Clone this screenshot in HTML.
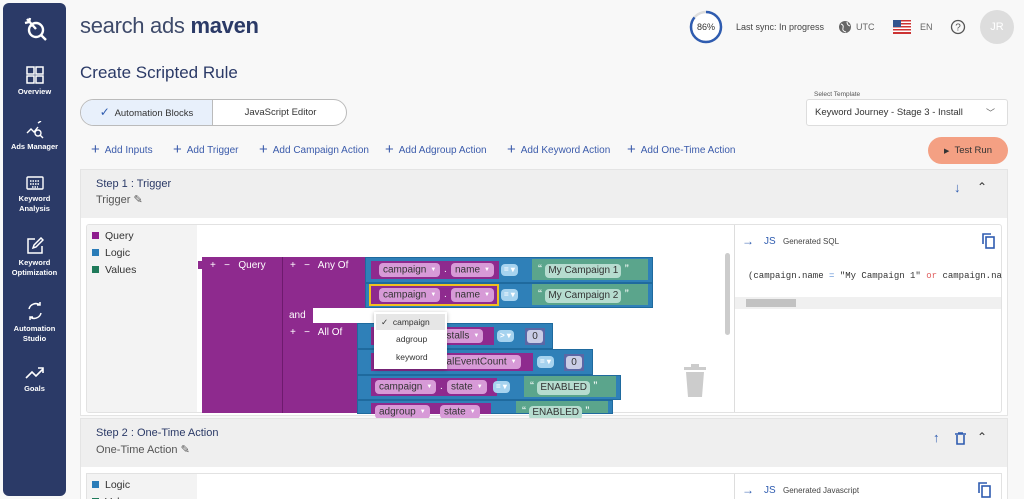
<!DOCTYPE html>
<html><head><meta charset="utf-8"><style>
*{box-sizing:border-box;margin:0;padding:0}
html{width:1024px;height:499px;overflow:hidden}
body{width:1024px;height:499px;overflow:hidden;background:#f8f8f8;font-family:"Liberation Sans",sans-serif;position:relative;color:#3a4a6e}
.a{position:absolute}
.sb{left:3px;top:3px;width:63px;height:493px;background:#2b3a67;border-radius:6px}
.nav{position:absolute;left:0;width:63px;text-align:center;color:#fff;font-size:7.5px;font-weight:bold;line-height:10px}
.nav svg{display:block;margin:0 auto 3px}
.add{position:absolute;top:140px;font-size:10px;color:#3b5bab}
.add b{font-size:15px;font-weight:normal;margin-right:5px;position:relative;top:1px}
.p{position:absolute;background:#8e2a8e}
.bl{position:absolute;background:#2f80b8;border:1px solid #1f6a9e}
.pill{position:absolute;height:14px;border-radius:4px;background:#d79ad7;color:#333;font-size:10px;line-height:14px;padding:0 4px}
.pill i{font-style:normal;font-size:6px;color:#fff;margin-left:4px;vertical-align:middle}
.op{position:absolute;height:12px;border-radius:4px;background:#a6d3ef;color:#fff;font-size:8px;line-height:12px;padding:0 3px;font-weight:bold}
.gr{position:absolute;height:21px;background:#5ba58c;color:#fff;font-size:12px;line-height:20px}
.gr span{background:#b6dccf;color:#333;border-radius:4px;padding:0 3px;font-size:10px;line-height:14px;display:inline-block}
.wt{color:#fff;font-size:10px}
</style></head><body>
<div class="a sb">
 <div class="nav" style="top:12px"><svg width="28" height="28" viewBox="0 0 28 28" fill="none" stroke="#fff" stroke-width="2.4"><circle cx="15" cy="15" r="7"/><path d="M20 20l5 5M6 4l9 10M4 8l4-1 1-4M9 11l3-1"/></svg></div>
 <div class="nav" style="top:63px"><svg width="18" height="18" viewBox="0 0 18 18" fill="none" stroke="#fff" stroke-width="1.5"><rect x="1" y="1" width="7" height="7"/><rect x="10" y="1" width="7" height="7"/><rect x="1" y="10" width="7" height="7"/><rect x="10" y="10" width="7" height="7"/></svg>Overview</div>
 <div class="nav" style="top:118px"><svg width="18" height="18" viewBox="0 0 18 18" fill="none" stroke="#fff" stroke-width="1.4"><path d="M1 12l4-4 3 3 4-5M12 2l3-2"/><circle cx="12" cy="12" r="3"/><path d="M14 14l3 3"/></svg>Ads Manager</div>
 <div class="nav" style="top:172px"><svg width="18" height="16" viewBox="0 0 18 16" fill="none" stroke="#fff" stroke-width="1.4"><rect x="1" y="2" width="16" height="12" rx="1"/><path d="M4 6h10M4 9h10M6 12h6" stroke-dasharray="1.5 1"/></svg>Keyword<br>Analysis</div>
 <div class="nav" style="top:234px"><svg width="18" height="18" viewBox="0 0 18 18" fill="none" stroke="#fff" stroke-width="1.5"><path d="M9 2H2v14h14V9"/><path d="M7 11l1-3 7-7 2 2-7 7z"/></svg>Keyword<br>Optimization</div>
 <div class="nav" style="top:298px"><svg width="20" height="20" viewBox="0 0 20 20" fill="none" stroke="#fff" stroke-width="1.5"><path d="M4 8a7 7 0 0 1 11-4M16 12a7 7 0 0 1-11 4M15 1v3h-3M5 19v-3h3"/></svg>Automation<br>Studio</div>
 <div class="nav" style="top:362px"><svg width="20" height="16" viewBox="0 0 20 16" fill="none" stroke="#fff" stroke-width="1.6"><path d="M1 13l6-6 4 4 7-7M13 3h5v5"/></svg>Goals</div>
</div>
<div class="a" style="left:80px;top:13px;font-size:22px;color:#3e4a6a;letter-spacing:-0.3px">search ads <b style="color:#2b3a67">maven</b></div>
<svg class="a" style="left:689px;top:10px" width="34" height="34"><circle cx="17" cy="17" r="15" fill="#fff" stroke="#ddd" stroke-width="2.5"/><circle cx="17" cy="17" r="15" fill="none" stroke="#2f5cb0" stroke-width="2.5" stroke-dasharray="81 94" transform="rotate(-90 17 17)"/><text x="17" y="20" font-size="9" text-anchor="middle" fill="#333" font-family="Liberation Sans">86%</text></svg>
<div class="a" style="left:736px;top:22px;font-size:9px;color:#444">Last sync: In progress</div>
<svg class="a" style="left:838px;top:20px" width="14" height="14"><circle cx="7" cy="7" r="6" fill="#666"/><path d="M3 4q3 1 2 4t3 4M9 2q0 3 3 4" stroke="#fff" fill="none"/></svg>
<div class="a" style="left:856px;top:22px;font-size:9px;color:#666">UTC</div>
<svg class="a" style="left:893px;top:20px" width="18" height="14"><rect width="18" height="14" fill="#fff"/><g fill="#c33"><rect y="0" width="18" height="1.5"/><rect y="3" width="18" height="1.5"/><rect y="6" width="18" height="1.5"/><rect y="9" width="18" height="1.5"/><rect y="12" width="18" height="2"/></g><rect width="8" height="7" fill="#33558f"/></svg>
<div class="a" style="left:920px;top:22px;font-size:9px;color:#666">EN</div>
<svg class="a" style="left:950px;top:19px" width="16" height="16"><circle cx="8" cy="8" r="6.5" fill="none" stroke="#555" stroke-width="1.3"/><text x="8" y="11.5" font-size="10" text-anchor="middle" fill="#555" font-family="Liberation Sans">?</text></svg>
<div class="a" style="left:980px;top:10px;width:34px;height:34px;border-radius:50%;background:#ddd;color:#fff;font-size:11px;line-height:34px;text-align:center">JR</div>
<div class="a" style="left:80px;top:63px;font-size:17px;color:#2b3a67">Create Scripted Rule</div>
<div class="a" style="left:80px;top:99px;width:267px;height:27px;border:1px solid #bbb;border-radius:14px;background:#fff;overflow:hidden">
 <div class="a" style="left:0;top:0;width:132px;height:25px;background:#e8f0fb;border-right:1px solid #bbb;font-size:9.5px;color:#333;line-height:25px;text-align:center"><span style="color:#2f5cb0;font-size:12px">✓</span>&nbsp; Automation Blocks</div>
 <div class="a" style="left:133px;top:0;width:133px;height:25px;font-size:9.5px;color:#333;line-height:25px;text-align:center">JavaScript Editor</div>
</div>
<div class="a" style="left:814px;top:91px;font-size:6.5px;color:#555">Select Template</div>
<div class="a" style="left:806px;top:99px;width:202px;height:27px;border:1px solid #ddd;border-radius:3px;background:#fff;font-size:9.5px;color:#333;line-height:26px;padding-left:8px">Keyword Journey - Stage 3 - Install<span style="position:absolute;right:12px;color:#666;font-size:9px">﹀</span></div>
<div class="add" style="left:91px"><b>+</b>Add Inputs</div>
<div class="add" style="left:173px"><b>+</b>Add Trigger</div>
<div class="add" style="left:259px"><b>+</b>Add Campaign Action</div>
<div class="add" style="left:385px"><b>+</b>Add Adgroup Action</div>
<div class="add" style="left:507px"><b>+</b>Add Keyword Action</div>
<div class="add" style="left:627px"><b>+</b>Add One-Time Action</div>
<div class="a" style="left:928px;top:137px;width:80px;height:27px;border-radius:14px;background:#f4a083;font-size:9.5px;color:#333;line-height:27px;text-align:center"><span style="font-size:7px">▶</span>&nbsp; Test Run</div>
<!-- step1 -->
<div class="a" style="left:80px;top:169px;width:928px;height:247px;background:#fff;border:1px solid #e4e4e4"></div>
<div class="a" style="left:81px;top:170px;width:926px;height:48px;background:#efefef"></div>
<div class="a" style="left:96px;top:178px;font-size:11px;color:#2b3a67">Step 1 : Trigger</div>
<div class="a" style="left:96px;top:193px;font-size:11px;color:#555">Trigger <span style="font-size:11px">✎</span></div>
<div class="a" style="left:954px;top:180px;font-size:13px;color:#2f5cb0">↓</div>
<div class="a" style="left:977px;top:180px;font-size:12px;color:#333">⌃</div>
<div class="a" style="left:86px;top:224px;width:916px;height:189px;border:1px solid #e2e2e2;border-radius:3px;background:#fff;overflow:hidden">
 <div class="a" style="left:0;top:0;width:110px;height:189px;background:#f3f3f3"></div>
 <div class="a" style="left:647px;top:0;width:1px;height:189px;background:#ddd"></div>
 <div class="a" style="left:638px;top:28px;width:5px;height:82px;border-radius:3px;background:#ccc"></div>
</div>
<div class="a" style="left:92px;top:228px;font-size:10.5px;color:#333;line-height:17px">
<div><span style="display:inline-block;width:7px;height:7px;background:#8e1d8e;margin-right:6px"></span>Query</div>
<div><span style="display:inline-block;width:7px;height:7px;background:#2a7cb8;margin-right:6px"></span>Logic</div>
<div><span style="display:inline-block;width:7px;height:7px;background:#1f7a5a;margin-right:6px"></span>Values</div></div>
<!-- blocks -->
<div class="p" style="left:202px;top:257px;width:80px;height:156px"></div>
<div class="p" style="left:198px;top:261px;width:5px;height:8px"></div>
<div class="a wt" style="left:210px;top:260px">+&nbsp;&nbsp; −&nbsp;&nbsp; Query</div>
<div class="p" style="left:282px;top:257px;width:84px;height:51px;border-left:1px solid #6e1a6e"></div>
<div class="a wt" style="left:290px;top:260px">+&nbsp;&nbsp; −&nbsp;&nbsp; Any Of</div>
<div class="p" style="left:282px;top:308px;width:31px;height:15px;border-left:1px solid #6e1a6e"></div>
<div class="a wt" style="left:289px;top:310px">and</div>
<div class="p" style="left:282px;top:323px;width:76px;height:90px;border-left:1px solid #6e1a6e"></div>
<div class="a wt" style="left:290px;top:327px">+&nbsp;&nbsp; −&nbsp;&nbsp; All Of</div>
<div class="bl" style="left:365px;top:257px;width:288px;height:26px"></div>
<div class="bl" style="left:365px;top:283px;width:288px;height:25px"></div>
<div class="p" style="left:371px;top:261px;width:128px;height:18px"></div>
<div class="pill" style="left:379px;top:263px">campaign<i>▼</i></div>
<div class="a wt" style="left:444px;top:264px">.</div>
<div class="pill" style="left:451px;top:263px">name<i>▼</i></div>
<div class="op" style="left:501px;top:264px">= ▾</div>
<div class="gr" style="left:532px;top:259px;width:116px;padding-left:6px">“ <span>My Campaign 1</span> ”</div>
<div class="p" style="left:371px;top:286px;width:126px;height:18px;outline:2px solid #f0c020"></div>
<div class="pill" style="left:379px;top:288px">campaign<i>▼</i></div>
<div class="a wt" style="left:444px;top:289px">.</div>
<div class="pill" style="left:451px;top:288px">name<i>▼</i></div>
<div class="op" style="left:501px;top:289px">= ▾</div>
<div class="gr" style="left:532px;top:284px;width:116px;padding-left:6px">“ <span>My Campaign 2</span> ”</div>
<div class="bl" style="left:357px;top:323px;width:196px;height:26px"></div>
<div class="p" style="left:371px;top:327px;width:123px;height:18px"></div>
<div class="pill" style="left:437px;top:329px">nstalls<i>▼</i></div>
<div class="op" style="left:497px;top:330px">&gt; ▾</div>
<div class="a" style="left:525px;top:328px;width:20px;height:17px;background:#5b67a5;padding:2px"><div style="background:#c9cde6;color:#333;font-size:10px;line-height:13px;text-align:center;border-radius:3px">0</div></div>
<div class="bl" style="left:357px;top:349px;width:236px;height:26px"></div>
<div class="p" style="left:371px;top:353px;width:162px;height:18px"></div>
<div class="pill" style="left:437px;top:355px">oalEventCount<i>▼</i></div>
<div class="op" style="left:537px;top:356px">= ▾</div>
<div class="a" style="left:564px;top:354px;width:20px;height:17px;background:#5b67a5;padding:2px"><div style="background:#c9cde6;color:#333;font-size:10px;line-height:13px;text-align:center;border-radius:3px">0</div></div>
<div class="bl" style="left:357px;top:375px;width:264px;height:25px"></div>
<div class="p" style="left:371px;top:378px;width:126px;height:18px"></div>
<div class="pill" style="left:375px;top:380px">campaign<i>▼</i></div>
<div class="a wt" style="left:440px;top:381px">.</div>
<div class="pill" style="left:447px;top:380px">state<i>▼</i></div>
<div class="op" style="left:493px;top:381px">= ▾</div>
<div class="gr" style="left:524px;top:376px;width:92px;padding-left:6px">“ <span>ENABLED</span> ”</div>
<div class="bl" style="left:357px;top:400px;width:256px;height:14px"></div>
<div class="p" style="left:371px;top:403px;width:120px;height:11px"></div>
<div class="pill" style="left:375px;top:405px">adgroup<i>▼</i></div>
<div class="pill" style="left:440px;top:405px">state<i>▼</i></div>
<div class="gr" style="left:516px;top:401px;width:92px;padding-left:6px;height:12px">“ <span>ENABLED</span> ”</div>
<div class="a" style="left:374px;top:312px;width:73px;height:57px;background:#fff;box-shadow:0 1px 4px rgba(0,0,0,.3);font-size:8.5px;color:#333">
 <div style="margin:2px 2px 0;background:#e6e6e6;height:16px;line-height:16px;padding-left:5px">✓&nbsp; campaign</div>
 <div style="height:19px;line-height:19px;padding-left:22px">adgroup</div>
 <div style="height:17px;line-height:17px;padding-left:22px">keyword</div>
</div>
<svg class="a" style="left:681px;top:363px" width="28" height="36"><rect x="3" y="4" width="22" height="3" fill="#ccc"/><rect x="10" y="1" width="8" height="3" fill="#ccc"/><path d="M5 9h18l-2 25H7z" fill="#ccc"/></svg>
<div class="a" style="left:742px;top:234px;font-size:12px;color:#2f5cb0">→</div>
<div class="a" style="left:764px;top:236px;font-size:10px;color:#2f5cb0">JS</div>
<div class="a" style="left:783px;top:237px;font-size:8px;color:#444">Generated SQL</div>
<svg class="a" style="left:981px;top:233px" width="14" height="16" fill="none" stroke="#2f5cb0" stroke-width="1.6"><path d="M2 11V1h8"/><rect x="5" y="4" width="8" height="11"/></svg>
<div class="a" style="left:748px;top:271px;font-family:'Liberation Mono',monospace;font-size:9px;color:#333;white-space:nowrap;width:254px;overflow:hidden">(campaign.name <span style="color:#5c8fd6">=</span> "My Campaign 1" <span style="color:#e06060">or</span> campaign.name</div>
<div class="a" style="left:735px;top:297px;width:266px;height:12px;background:#f0f0f0"></div>
<div class="a" style="left:746px;top:299px;width:50px;height:8px;background:#c2c2c2"></div>
<!-- step2 -->
<div class="a" style="left:80px;top:418px;width:928px;height:90px;background:#fff;border:1px solid #e4e4e4"></div>
<div class="a" style="left:81px;top:419px;width:926px;height:48px;background:#efefef"></div>
<div class="a" style="left:96px;top:427px;font-size:11px;color:#2b3a67">Step 2 : One-Time Action</div>
<div class="a" style="left:96px;top:443px;font-size:11px;color:#555">One-Time Action <span style="font-size:11px">✎</span></div>
<div class="a" style="left:933px;top:430px;font-size:13px;color:#2f5cb0">↑</div>
<svg class="a" style="left:955px;top:432px" width="11" height="13" fill="none" stroke="#2f5cb0" stroke-width="1.6"><path d="M0 2h11M3 1h5M2 3v9h7V3"/></svg>
<div class="a" style="left:977px;top:430px;font-size:12px;color:#333">⌃</div>
<div class="a" style="left:86px;top:473px;width:916px;height:40px;border:1px solid #e2e2e2;background:#fff">
 <div class="a" style="left:0;top:0;width:110px;height:40px;background:#f3f3f3"></div>
 <div class="a" style="left:647px;top:0;width:1px;height:40px;background:#ddd"></div>
</div>
<div class="a" style="left:92px;top:477px;font-size:10.5px;color:#333;line-height:17px">
<div><span style="display:inline-block;width:7px;height:7px;background:#2a7cb8;margin-right:6px"></span>Logic</div>
<div><span style="display:inline-block;width:7px;height:7px;background:#1f7a5a;margin-right:6px"></span>Values</div></div>
<div class="a" style="left:742px;top:483px;font-size:12px;color:#2f5cb0">→</div>
<div class="a" style="left:764px;top:485px;font-size:10px;color:#2f5cb0">JS</div>
<div class="a" style="left:783px;top:486px;font-size:8px;color:#444">Generated Javascript</div>
<svg class="a" style="left:977px;top:482px" width="14" height="16" fill="none" stroke="#2f5cb0" stroke-width="1.6"><path d="M2 11V1h8"/><rect x="5" y="4" width="8" height="11"/></svg>
</body></html>
